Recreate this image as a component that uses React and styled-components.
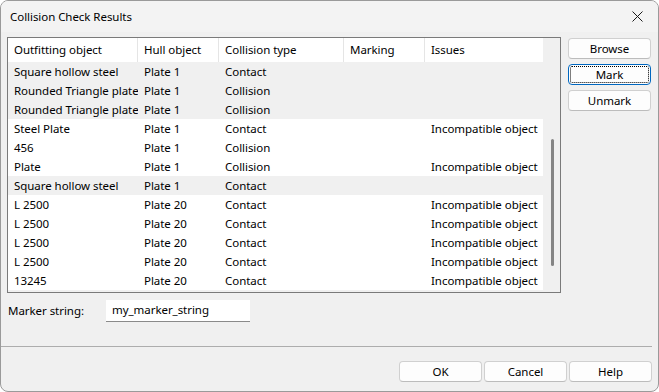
import React from "react";
import styled, { createGlobalStyle } from "styled-components";

const Global = createGlobalStyle`
  html, body { margin: 0; padding: 0; background: #ffffff; }
  * { box-sizing: border-box; }
  body {
    font-family: "Noto Sans", "Open Sans", sans-serif;
    font-size: 11.5px;
    letter-spacing: -0.05px;
    color: #000;
  }
`;

const Window = styled.div`
  width: 659px;
  height: 392px;
  border: 1px solid #9a9a9a;
  border-radius: 8px;
  background: #f0f0f0;
  display: flex;
  flex-direction: column;
  overflow: hidden;
`;

const TitleBar = styled.div`
  height: 31px;
  flex: none;
  display: flex;
  align-items: center;
  justify-content: space-between;
  padding: 0 0 0 9px;
  background: #f3f3f3;
`;

const Title = styled.span`
  font-size: 11.5px;
  margin-top: -1px;
`;

const CloseBtn = styled.div`
  width: 46px;
  height: 31px;
  display: flex;
  align-items: center;
  justify-content: center;
  margin-right: -2px;
`;

const Content = styled.div`
  flex: 1;
  display: flex;
  flex-direction: column;
  padding: 5px 6px 0 6px;
`;

const TopRow = styled.div`
  display: flex;
  gap: 7px;
`;

const Frame = styled.div`
  width: 554px;
  height: 256px;
  border: 1px solid #7a7a7a;
  display: flex;
  background: #f0f0f0;
`;

const List = styled.div`
  width: 535px;
  display: flex;
  flex-direction: column;
`;

const cols = "130px 81px 125px 81px 118px";

const HeaderRow = styled.div`
  display: grid;
  grid-template-columns: ${cols};
  height: 24px;
  background: #fff;
`;

const HeaderCell = styled.div`
  padding-left: 6px;
  display: flex;
  align-items: center;
  border-right: 1px solid ${(p) => (p.$last ? "transparent" : "#e5e5e5")};
  white-space: nowrap;
  padding-bottom: 1px;
`;

const Row = styled.div`
  display: grid;
  grid-template-columns: ${cols};
  height: 19px;
  background: ${(p) => (p.$shaded ? "#f0f0f0" : "#ffffff")};
`;

const Cell = styled.div`
  padding-left: 6px;
  display: flex;
  align-items: center;
  white-space: nowrap;
  overflow: hidden;
  padding-bottom: 1px;
`;

const ScrollTrack = styled.div`
  flex: 1;
  position: relative;
`;

const ScrollThumb = styled.div`
  position: absolute;
  left: 8px;
  top: 101px;
  width: 3px;
  height: 127px;
  border-radius: 2px;
  background: #858585;
`;

const SideButtons = styled.div`
  display: flex;
  flex-direction: column;
  gap: 5px;
  padding-top: 1px;
`;

const Button = styled.button`
  position: relative;
  width: 83px;
  height: 21px;
  padding: 0 0 1px 0;
  font-family: inherit;
  font-size: 11.5px;
  letter-spacing: inherit;
  color: #000;
  background: #fdfdfd;
  border: 1px solid ${(p) => (p.$focused ? "#0067c0" : "#d0d0d0")};
  border-bottom-color: ${(p) => (p.$focused ? "#0067c0" : "#bcbcbc")};
  border-radius: 4px;
  display: flex;
  align-items: center;
  justify-content: center;
  ${(p) =>
    p.$focused &&
    `&::after {
      content: "";
      position: absolute;
      inset: 1px;
      border: 1px dotted #000;
      border-radius: 2px;
    }`}
`;

const MarkerRow = styled.div`
  display: flex;
  align-items: center;
  margin-top: 7px;
  padding-left: 1px;
`;

const Label = styled.span`
  width: 98px;
  padding-bottom: 2px;
`;

const Input = styled.div`
  width: 144px;
  height: 22px;
  background: #fff;
  border-bottom: 1px solid #8a8a8a;
  padding-left: 6px;
  display: flex;
  align-items: center;
  padding-bottom: 2px;
`;

const Separator = styled.div`
  height: 1px;
  background: #adadad;
  margin: 24px 0 0 -6px;
  width: 651px;
`;

const Footer = styled.div`
  display: flex;
  justify-content: flex-end;
  gap: 2px;
  margin-top: 14px;
`;

const rows = [
  ["Square hollow steel", "Plate 1", "Contact", "", "", true],
  ["Rounded Triangle plate", "Plate 1", "Collision", "", "", true],
  ["Rounded Triangle plate", "Plate 1", "Collision", "", "", true],
  ["Steel Plate", "Plate 1", "Contact", "", "Incompatible object", false],
  ["456", "Plate 1", "Collision", "", "", false],
  ["Plate", "Plate 1", "Collision", "", "Incompatible object", false],
  ["Square hollow steel", "Plate 1", "Contact", "", "", true],
  ["L 2500", "Plate 20", "Contact", "", "Incompatible object", false],
  ["L 2500", "Plate 20", "Contact", "", "Incompatible object", false],
  ["L 2500", "Plate 20", "Contact", "", "Incompatible object", false],
  ["L 2500", "Plate 20", "Contact", "", "Incompatible object", false],
  ["13245", "Plate 20", "Contact", "", "Incompatible object", false],
];

const headers = ["Outfitting object", "Hull object", "Collision type", "Marking", "Issues"];

export default function App() {
  return (
    <>
      <Global />
      <Window>
        <TitleBar>
          <Title>Collision Check Results</Title>
          <CloseBtn>
            <svg width="11" height="11" viewBox="0 0 11 11">
              <path d="M0.5 0.5 L10.5 10.5 M10.5 0.5 L0.5 10.5" stroke="#1a1a1a" strokeWidth="1" fill="none" />
            </svg>
          </CloseBtn>
        </TitleBar>
        <Content>
          <TopRow>
            <Frame>
              <List>
                <HeaderRow>
                  {headers.map((h, i) => (
                    <HeaderCell key={h} $last={i === headers.length - 1}>
                      {h}
                    </HeaderCell>
                  ))}
                </HeaderRow>
                {rows.map((r, i) => (
                  <Row key={i} $shaded={r[5]}>
                    {r.slice(0, 5).map((c, j) => (
                      <Cell key={j}>{c}</Cell>
                    ))}
                  </Row>
                ))}
              </List>
              <ScrollTrack>
                <ScrollThumb />
              </ScrollTrack>
            </Frame>
            <SideButtons>
              <Button>Browse</Button>
              <Button $focused>Mark</Button>
              <Button>Unmark</Button>
            </SideButtons>
          </TopRow>
          <MarkerRow>
            <Label>Marker string:</Label>
            <Input>my_marker_string</Input>
          </MarkerRow>
          <Separator />
          <Footer>
            <Button>OK</Button>
            <Button>Cancel</Button>
            <Button>Help</Button>
          </Footer>
        </Content>
      </Window>
    </>
  );
}
